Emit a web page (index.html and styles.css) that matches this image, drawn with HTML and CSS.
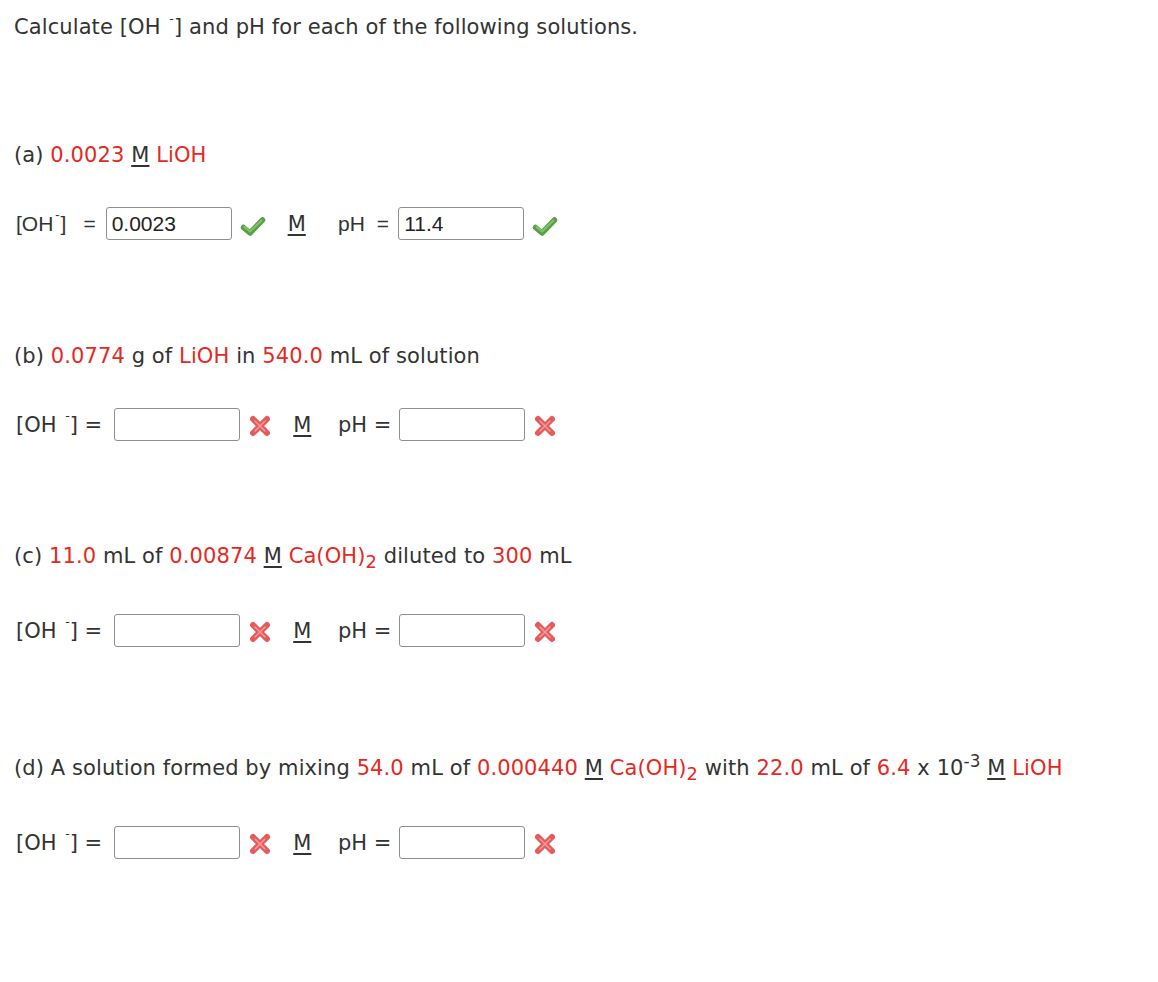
FILE: index.html
```html
<!DOCTYPE html>
<html>
<head>
<meta charset="utf-8">
<link rel="stylesheet" href="styles.css">
</head>
<body>
<div class="page">
  <p class="title">Calculate [OH <sup class="minus">-</sup>] and pH for each of the following solutions.</p>

  <p class="part part-a">(a) <span class="red">0.0023</span> <span class="unit">M</span> <span class="red">LiOH</span></p>
  <div class="row row-a">
    <div class="left">
      <span class="lbl lbl-a">[OH<sup class="minus-a">-</sup>]<span class="eq">=</span></span>
      <span class="box">0.0023</span>
      <svg class="icon chk" viewBox="0 0 26 22" width="26" height="22"><path d="M3.5 12.5 L10 18 L22.5 5" fill="none" stroke="#58a045" stroke-width="5.5" stroke-linecap="round" stroke-linejoin="round"/><path d="M4.5 12 L10 16.5 L21.5 5.5" fill="none" stroke="#82c26d" stroke-width="2" stroke-linecap="round" stroke-linejoin="round"/></svg>
      <span class="unit m-a">M</span>
    </div>
    <span class="lbl lbl-a lbl-pha">pH<span class="eq">=</span></span>
    <span class="box">11.4</span>
    <svg class="icon chk" viewBox="0 0 26 22" width="26" height="22"><path d="M3.5 12.5 L10 18 L22.5 5" fill="none" stroke="#58a045" stroke-width="5.5" stroke-linecap="round" stroke-linejoin="round"/><path d="M4.5 12 L10 16.5 L21.5 5.5" fill="none" stroke="#82c26d" stroke-width="2" stroke-linecap="round" stroke-linejoin="round"/></svg>
  </div>

  <p class="part part-b">(b) <span class="red">0.0774</span> g of <span class="red">LiOH</span> in <span class="red">540.0</span> mL of solution</p>
  <div class="row">
    <div class="left">
      <span class="lbl lbl-oh">[OH <sup class="minus">-</sup>] =</span>
      <span class="box"></span>
      <svg class="icon x" viewBox="0 0 24 24" width="24" height="24"><path d="M5 5 L19 19 M19 5 L5 19" stroke="#e55a5a" stroke-width="6" stroke-linecap="round"/><path d="M7 7 L17 17 M17 7 L7 17" stroke="#f39a9a" stroke-width="1.5" stroke-linecap="round"/></svg>
      <span class="unit m-b">M</span>
    </div>
    <span class="lbl lbl-ph">pH =</span>
    <span class="box"></span>
    <svg class="icon x" viewBox="0 0 24 24" width="24" height="24"><path d="M5 5 L19 19 M19 5 L5 19" stroke="#e55a5a" stroke-width="6" stroke-linecap="round"/><path d="M7 7 L17 17 M17 7 L7 17" stroke="#f39a9a" stroke-width="1.5" stroke-linecap="round"/></svg>
  </div>

  <p class="part part-c">(c) <span class="red">11.0</span> mL of <span class="red">0.00874</span> <span class="unit">M</span> <span class="red">Ca(OH)<sub>2</sub></span> diluted to <span class="red">300</span> mL</p>
  <div class="row row-c">
    <div class="left">
      <span class="lbl lbl-oh">[OH <sup class="minus">-</sup>] =</span>
      <span class="box"></span>
      <svg class="icon x" viewBox="0 0 24 24" width="24" height="24"><path d="M5 5 L19 19 M19 5 L5 19" stroke="#e55a5a" stroke-width="6" stroke-linecap="round"/><path d="M7 7 L17 17 M17 7 L7 17" stroke="#f39a9a" stroke-width="1.5" stroke-linecap="round"/></svg>
      <span class="unit m-b">M</span>
    </div>
    <span class="lbl lbl-ph">pH =</span>
    <span class="box"></span>
    <svg class="icon x" viewBox="0 0 24 24" width="24" height="24"><path d="M5 5 L19 19 M19 5 L5 19" stroke="#e55a5a" stroke-width="6" stroke-linecap="round"/><path d="M7 7 L17 17 M17 7 L7 17" stroke="#f39a9a" stroke-width="1.5" stroke-linecap="round"/></svg>
  </div>

  <p class="part part-d">(d) A solution formed by mixing <span class="red">54.0</span> mL of <span class="red">0.000440</span> <span class="unit">M</span> <span class="red">Ca(OH)<sub>2</sub></span> with <span class="red">22.0</span> mL of <span class="red">6.4</span> x 10<sup class="exp">-3</sup> <span class="unit">M</span> <span class="red">LiOH</span></p>
  <div class="row row-d">
    <div class="left">
      <span class="lbl lbl-oh">[OH <sup class="minus">-</sup>] =</span>
      <span class="box"></span>
      <svg class="icon x" viewBox="0 0 24 24" width="24" height="24"><path d="M5 5 L19 19 M19 5 L5 19" stroke="#e55a5a" stroke-width="6" stroke-linecap="round"/><path d="M7 7 L17 17 M17 7 L7 17" stroke="#f39a9a" stroke-width="1.5" stroke-linecap="round"/></svg>
      <span class="unit m-b">M</span>
    </div>
    <span class="lbl lbl-ph">pH =</span>
    <span class="box"></span>
    <svg class="icon x" viewBox="0 0 24 24" width="24" height="24"><path d="M5 5 L19 19 M19 5 L5 19" stroke="#e55a5a" stroke-width="6" stroke-linecap="round"/><path d="M7 7 L17 17 M17 7 L7 17" stroke="#f39a9a" stroke-width="1.5" stroke-linecap="round"/></svg>
  </div>
</div>
</body>
</html>
```

FILE: styles.css
```css
html, body {
  margin: 0;
  background: #ffffff;
}
.page {
  padding: 14px 14px 0 14px;
  font-family: "DejaVu Sans", Verdana, sans-serif;
  font-size: 21px;
  letter-spacing: 0.1px;
  color: #333333;
}
p {
  margin: 0;
  line-height: 26px;
}
.red {
  color: #e5291f;
}
.unit {
  text-decoration: underline;
  text-decoration-thickness: 2px;
  text-underline-offset: 3px;
  color: #333333;
}
sub {
  font-size: 0.85em;
  line-height: 0;
  vertical-align: -0.3em;
}
.exp {
  font-size: 0.8em;
  line-height: 0;
  vertical-align: 0.5em;
}
.minus, .minus-a {
  font-size: 0.6em;
  line-height: 0;
  vertical-align: 0.9em;
}
.minus {
  margin-left: 2px;
}
.minus-a {
  margin: 0 1px 0 2px;
}
.part-a { margin-top: 102px; }
.part-b { margin-top: 103px; }
.part-c { margin-top: 102px; }
.part-d { margin-top: 108px; }
.row {
  display: flex;
  align-items: center;
  height: 33px;
  margin-top: 39px;
  padding-left: 2px;
  letter-spacing: 0;
}
.row-c { margin-top: 45px; }
.row-d { margin-top: 45px; }
.left {
  display: flex;
  align-items: center;
  width: 322px;
  flex: none;
}
.lbl {
  white-space: nowrap;
}
.lbl-oh {
  margin-right: 12px;
}
.lbl-ph {
  margin-right: 8px;
}
.lbl-a {
  font-family: "Liberation Sans", Arial, sans-serif;
  font-size: 21px;
  margin-right: 10px;
}
.lbl-a .eq {
  margin-left: 17px;
}
.lbl-pha .eq {
  margin-left: 12px;
}
.lbl-pha {
  margin-right: 9px;
}
.box {
  box-sizing: border-box;
  flex: none;
  width: 126px;
  height: 33px;
  border: 1px solid #8f8f8f;
  border-radius: 3px;
  padding: 0 5px;
  line-height: 31px;
  font-family: "Liberation Sans", Arial, sans-serif;
  font-size: 21px;
  color: #222;
}
.icon {
  margin-left: 8px;
  flex: none;
}
.chk {
  margin-top: 4px;
}
.x {
  margin-top: 2px;
}
.m-a { margin-left: 22px; }
.m-b { margin-left: 21px; }
```
